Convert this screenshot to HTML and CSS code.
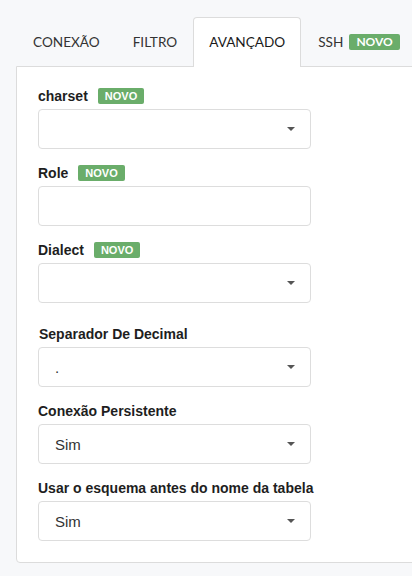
FILE: index.html
```html
<!DOCTYPE html>
<html lang="pt">
<head>
<meta charset="utf-8">
<link rel="stylesheet" href="styles.css">
</head>
<body>
<div class="page">
  <ul class="tabs">
    <li class="tab">CONEXÃO</li>
    <li class="tab">FILTRO</li>
    <li class="tab active">AVANÇADO</li>
    <li class="tab">SSH <span class="tab-badge">NOVO</span></li>
  </ul>
  <div class="panel">
    <div class="field">
      <div class="label-row"><span class="label">charset</span><span class="badge">NOVO</span></div>
      <div class="select"><span class="value"></span><span class="caret"></span></div>
    </div>
    <div class="field">
      <div class="label-row"><span class="label">Role</span><span class="badge">NOVO</span></div>
      <div class="input"></div>
    </div>
    <div class="field">
      <div class="label-row"><span class="label">Dialect</span><span class="badge">NOVO</span></div>
      <div class="select"><span class="value"></span><span class="caret"></span></div>
    </div>
    <div class="field spaced">
      <div class="label-row"><span class="label shifted">Separador De Decimal</span></div>
      <div class="select"><span class="value">.</span><span class="caret"></span></div>
    </div>
    <div class="field">
      <div class="label-row"><span class="label">Conexão Persistente</span></div>
      <div class="select"><span class="value">Sim</span><span class="caret"></span></div>
    </div>
    <div class="field last">
      <div class="label-row"><span class="label">Usar o esquema antes do nome da tabela</span></div>
      <div class="select"><span class="value">Sim</span><span class="caret"></span></div>
    </div>
  </div>
</div>
</body>
</html>
```

FILE: styles.css
```css
html, body {
  margin: 0;
  padding: 0;
  background: #f7f8fa;
  overflow: hidden;
}

.page {
  padding: 17px 0 0 16px;
  width: 420px;
}

.tabs {
  list-style: none;
  margin: 0;
  padding: 0;
  display: flex;
  position: relative;
  z-index: 1;
}

.tab {
  font-family: Lato, "Liberation Sans", sans-serif;
  font-size: 13.6px;
  line-height: 20px;
  color: #333;
  padding: 14px 15px 14px 16px;
  border: 1px solid transparent;
  border-bottom: none;
  border-radius: 4px 4px 0 0;
  display: flex;
  align-items: center;
  white-space: nowrap;
}

.tab.active {
  background: #fff;
  border-color: #dcdcdc;
  color: #1a1a1a;
  padding: 14px 15px 15px 15px;
  margin-bottom: -1px;
}

.tab-badge {
  display: inline-block;
  margin-left: 6px;
  background: #6aad6a;
  color: #fff;
  font-family: Lato, "Liberation Sans", sans-serif;
  font-weight: bold;
  font-size: 12px;
  line-height: 16px;
  height: 16px;
  padding: 0 7px;
  border-radius: 2px;
}

.panel {
  background: #fff;
  border: 1px solid #dcdcdc;
  border-radius: 0 0 0 4px;
  padding: 21px 0 21px 21px;
}

.field {
  width: 273px;
  margin-bottom: 16px;
}

.field.spaced {
  margin-top: 23px;
}

.field.last {
  margin-bottom: 0;
}

.label-row {
  display: flex;
  align-items: center;
  height: 16px;
  margin-bottom: 5px;
  white-space: nowrap;
}

.label {
  font-family: "Liberation Sans", Arial, sans-serif;
  font-weight: bold;
  font-size: 14px;
  line-height: 16px;
  color: #1e1e1e;
}

.label.shifted {
  padding-left: 1px;
}

.badge {
  margin-left: 10px;
  background: #6aad6a;
  color: #fff;
  font-family: "Liberation Sans", Arial, sans-serif;
  font-weight: bold;
  font-size: 11px;
  line-height: 16px;
  height: 16px;
  padding: 0 7px;
  border-radius: 2px;
}

.select, .input {
  box-sizing: border-box;
  height: 40px;
  border: 1px solid #dddddd;
  border-radius: 4px;
  background: #fff;
  display: flex;
  align-items: center;
  justify-content: space-between;
  padding: 0 15px 0 16px;
}

.value {
  font-family: "Liberation Sans", Arial, sans-serif;
  font-size: 15px;
  color: #333;
}

.caret {
  width: 0;
  height: 0;
  border-left: 4.5px solid transparent;
  border-right: 4.5px solid transparent;
  border-top: 4.5px solid #555;
}
```
